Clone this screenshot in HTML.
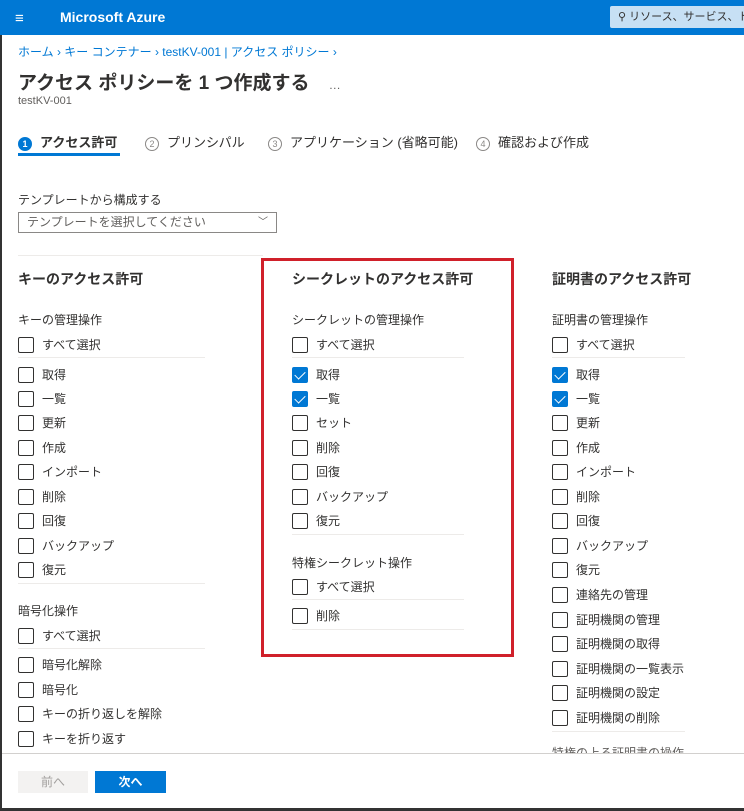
<!DOCTYPE html>
<html><head><meta charset="utf-8"><style>
*{margin:0;padding:0;box-sizing:border-box}
body{width:744px;height:811px;overflow:hidden;background:#fff;position:relative;font-family:"Liberation Sans","Noto Sans CJK JP",sans-serif;color:#323130;font-size:12px}
.a{position:absolute;white-space:nowrap}
.cb{position:absolute;width:16px;height:16px;border:1px solid #323130;border-radius:2px;background:#fff}
.ck{background:#0078d4;border-color:#0078d4}
.ck::after{content:"";position:absolute;left:4px;top:1px;width:5px;height:9px;border:solid #fff;border-width:0 1.5px 1.5px 0;transform:rotate(45deg)}
.t{position:absolute;font-size:12px;line-height:16px;color:#323130;white-space:nowrap}
.sep{position:absolute;height:1px;background:#edebe9}
.h{position:absolute;font-size:14px;font-weight:bold;color:#323130;white-space:nowrap}
.l{position:absolute;font-size:12px;color:#323130;white-space:nowrap}
.num{display:inline-block;width:14px;height:14px;border:1px solid #8a8886;border-radius:50%;font-size:9px;line-height:12px;text-align:center;color:#8a8886;vertical-align:middle;margin-right:8px}
</style></head><body>
<div class="a" style="left:0;top:0;width:744px;height:35px;background:#0078d4"></div>
<div class="a" style="left:15px;top:10px;color:#fff;font-size:15px">≡</div>
<div class="a" style="left:60px;top:9px;color:#fff;font-size:14px;font-weight:bold">Microsoft Azure</div>
<div class="a" style="left:610px;top:6px;width:140px;height:22px;background:#c7e0f4;border-radius:2px;color:#323130;font-size:11px;line-height:22px;padding-left:8px">⚲ リソース、サービス、ドキュ</div>
<div class="a" style="left:0;top:35px;width:2px;height:776px;background:#333"></div>
<div class="a" style="left:0;top:808px;width:744px;height:3px;background:#333"></div>

<div class="a" style="left:18px;top:43px;color:#0078d4;font-size:12px">ホーム › キー コンテナー › testKV-001 | アクセス ポリシー ›</div>
<div class="a" style="left:18px;top:68px;font-size:19px;font-weight:bold;color:#323130">アクセス ポリシーを 1 つ作成する <span style="font-size:12px;font-weight:normal;margin-left:14px;color:#605e5c">…</span></div>
<div class="a" style="left:18px;top:95px;font-size:11px;color:#605e5c">testKV-001</div>

<div class="a" style="left:18px;top:132px;font-size:13px;font-weight:bold"><span class="num" style="background:#0078d4;border-color:#0078d4;color:#fff">1</span>アクセス許可</div>
<div class="a" style="left:18px;top:153px;width:102px;height:3px;background:#0078d4"></div>
<div class="a" style="left:145px;top:132px;font-size:13px"><span class="num">2</span>プリンシパル</div>
<div class="a" style="left:268px;top:132px;font-size:13px"><span class="num">3</span>アプリケーション (省略可能)</div>
<div class="a" style="left:476px;top:132px;font-size:13px"><span class="num">4</span>確認および作成</div>

<div class="l" style="left:18px;top:191px">テンプレートから構成する</div>
<div class="a" style="left:18px;top:212px;width:259px;height:21px;border:1px solid #8a8886;color:#605e5c;font-size:12px;line-height:19px;padding-left:8px">テンプレートを選択してください<span style="position:absolute;right:8px;top:0;font-size:10px">﹀</span></div>
<div class="sep" style="left:18px;top:255px;width:245px"></div>

<!-- left column -->
<div class="h" style="left:18px;top:269px">キーのアクセス許可</div>
<div class="l" style="left:18px;top:311px">キーの管理操作</div>
<div class="cb" style="left:18px;top:337px"></div><div class="t" style="left:42px;top:337px">すべて選択</div>
<div class="sep" style="left:18px;top:357px;width:187px"></div>
<div class="cb" style="left:18px;top:367px"></div><div class="t" style="left:42px;top:367px">取得</div>
<div class="cb" style="left:18px;top:391px"></div><div class="t" style="left:42px;top:391px">一覧</div>
<div class="cb" style="left:18px;top:415px"></div><div class="t" style="left:42px;top:415px">更新</div>
<div class="cb" style="left:18px;top:440px"></div><div class="t" style="left:42px;top:440px">作成</div>
<div class="cb" style="left:18px;top:464px"></div><div class="t" style="left:42px;top:464px">インポート</div>
<div class="cb" style="left:18px;top:489px"></div><div class="t" style="left:42px;top:489px">削除</div>
<div class="cb" style="left:18px;top:513px"></div><div class="t" style="left:42px;top:513px">回復</div>
<div class="cb" style="left:18px;top:538px"></div><div class="t" style="left:42px;top:538px">バックアップ</div>
<div class="cb" style="left:18px;top:562px"></div><div class="t" style="left:42px;top:562px">復元</div>
<div class="sep" style="left:18px;top:583px;width:187px"></div>
<div class="l" style="left:18px;top:602px">暗号化操作</div>
<div class="cb" style="left:18px;top:628px"></div><div class="t" style="left:42px;top:628px">すべて選択</div>
<div class="sep" style="left:18px;top:648px;width:187px"></div>
<div class="cb" style="left:18px;top:657px"></div><div class="t" style="left:42px;top:657px">暗号化解除</div>
<div class="cb" style="left:18px;top:682px"></div><div class="t" style="left:42px;top:682px">暗号化</div>
<div class="cb" style="left:18px;top:706px"></div><div class="t" style="left:42px;top:706px">キーの折り返しを解除</div>
<div class="cb" style="left:18px;top:731px"></div><div class="t" style="left:42px;top:731px">キーを折り返す</div>

<!-- middle -->
<div class="a" style="left:261px;top:258px;width:253px;height:399px;border:3px solid #d0202a"></div>
<div class="h" style="left:292px;top:269px">シークレットのアクセス許可</div>
<div class="l" style="left:292px;top:311px">シークレットの管理操作</div>
<div class="cb" style="left:292px;top:337px"></div><div class="t" style="left:316px;top:337px">すべて選択</div>
<div class="sep" style="left:292px;top:357px;width:172px"></div>
<div class="cb ck" style="left:292px;top:367px"></div><div class="t" style="left:316px;top:367px">取得</div>
<div class="cb ck" style="left:292px;top:391px"></div><div class="t" style="left:316px;top:391px">一覧</div>
<div class="cb" style="left:292px;top:415px"></div><div class="t" style="left:316px;top:415px">セット</div>
<div class="cb" style="left:292px;top:440px"></div><div class="t" style="left:316px;top:440px">削除</div>
<div class="cb" style="left:292px;top:464px"></div><div class="t" style="left:316px;top:464px">回復</div>
<div class="cb" style="left:292px;top:489px"></div><div class="t" style="left:316px;top:489px">バックアップ</div>
<div class="cb" style="left:292px;top:513px"></div><div class="t" style="left:316px;top:513px">復元</div>
<div class="sep" style="left:292px;top:534px;width:172px"></div>
<div class="l" style="left:292px;top:554px">特権シークレット操作</div>
<div class="cb" style="left:292px;top:579px"></div><div class="t" style="left:316px;top:579px">すべて選択</div>
<div class="sep" style="left:292px;top:599px;width:172px"></div>
<div class="cb" style="left:292px;top:608px"></div><div class="t" style="left:316px;top:608px">削除</div>
<div class="sep" style="left:292px;top:629px;width:172px"></div>

<!-- right -->
<div class="h" style="left:552px;top:269px">証明書のアクセス許可</div>
<div class="l" style="left:552px;top:311px">証明書の管理操作</div>
<div class="cb" style="left:552px;top:337px"></div><div class="t" style="left:576px;top:337px">すべて選択</div>
<div class="sep" style="left:552px;top:357px;width:133px"></div>
<div class="cb ck" style="left:552px;top:367px"></div><div class="t" style="left:576px;top:367px">取得</div>
<div class="cb ck" style="left:552px;top:391px"></div><div class="t" style="left:576px;top:391px">一覧</div>
<div class="cb" style="left:552px;top:415px"></div><div class="t" style="left:576px;top:415px">更新</div>
<div class="cb" style="left:552px;top:440px"></div><div class="t" style="left:576px;top:440px">作成</div>
<div class="cb" style="left:552px;top:464px"></div><div class="t" style="left:576px;top:464px">インポート</div>
<div class="cb" style="left:552px;top:489px"></div><div class="t" style="left:576px;top:489px">削除</div>
<div class="cb" style="left:552px;top:513px"></div><div class="t" style="left:576px;top:513px">回復</div>
<div class="cb" style="left:552px;top:538px"></div><div class="t" style="left:576px;top:538px">バックアップ</div>
<div class="cb" style="left:552px;top:562px"></div><div class="t" style="left:576px;top:562px">復元</div>
<div class="cb" style="left:552px;top:587px"></div><div class="t" style="left:576px;top:587px">連絡先の管理</div>
<div class="cb" style="left:552px;top:612px"></div><div class="t" style="left:576px;top:612px">証明機関の管理</div>
<div class="cb" style="left:552px;top:636px"></div><div class="t" style="left:576px;top:636px">証明機関の取得</div>
<div class="cb" style="left:552px;top:661px"></div><div class="t" style="left:576px;top:661px">証明機関の一覧表示</div>
<div class="cb" style="left:552px;top:685px"></div><div class="t" style="left:576px;top:685px">証明機関の設定</div>
<div class="cb" style="left:552px;top:710px"></div><div class="t" style="left:576px;top:710px">証明機関の削除</div>
<div class="sep" style="left:552px;top:731px;width:133px"></div>
<div class="a" style="left:552px;top:744px;height:9px;overflow:hidden;font-size:12px;color:#605e5c">特権の上る証明書の操作</div>

<!-- footer -->
<div class="a" style="left:2px;top:753px;width:742px;height:55px;background:#fff;border-top:1px solid #d2d0ce"></div>
<div class="a" style="left:18px;top:771px;width:70px;height:22px;background:#f3f2f1;color:#a19f9d;font-size:12px;line-height:22px;text-align:center">前へ</div>
<div class="a" style="left:95px;top:771px;width:71px;height:22px;background:#0078d4;color:#fff;font-size:12px;font-weight:bold;line-height:22px;text-align:center">次へ</div>
</body></html>
